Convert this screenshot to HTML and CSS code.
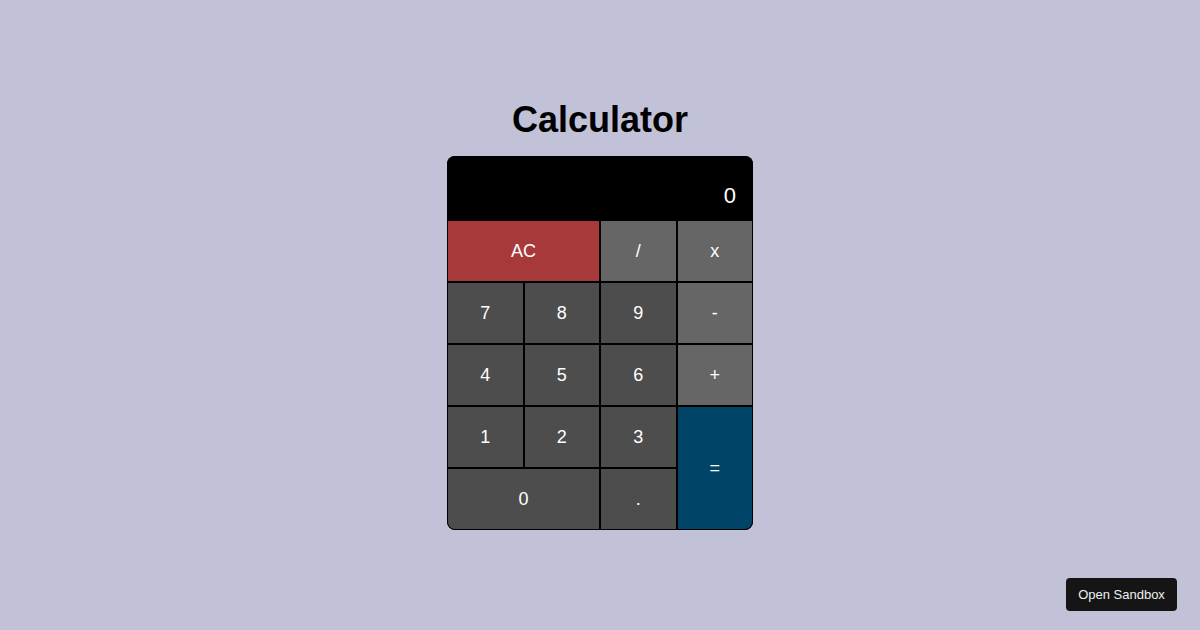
FILE: index.html
```html
<!DOCTYPE html>
<html>
<head>
<meta charset="utf-8">
<link rel="stylesheet" href="styles.css">
</head>
<body>
<main class="page">
  <h1 class="title">Calculator</h1>
  <div class="calc">
    <div class="display">0</div>
    <div class="keys">
      <button class="key key-clear span2">AC</button>
      <button class="key key-op">/</button>
      <button class="key key-op">x</button>
      <button class="key">7</button>
      <button class="key">8</button>
      <button class="key">9</button>
      <button class="key key-op">-</button>
      <button class="key">4</button>
      <button class="key">5</button>
      <button class="key">6</button>
      <button class="key key-op">+</button>
      <button class="key">1</button>
      <button class="key">2</button>
      <button class="key">3</button>
      <button class="key key-eq">=</button>
      <button class="key span2 key-bl">0</button>
      <button class="key">.</button>
    </div>
  </div>
</main>
<a class="sandbox">Open Sandbox</a>
</body>
</html>
```
FILE: styles.css
```css
html, body {
  margin: 0;
  padding: 0;
  height: 100%;
}
body {
  background: #c1c1d7;
  font-family: "Liberation Sans", Arial, sans-serif;
  overflow: hidden;
}
.page {
  display: flex;
  flex-direction: column;
  align-items: center;
  padding-top: 99px;
}
.title {
  margin: 0 0 15px 0;
  font-size: 36px;
  font-weight: bold;
  line-height: 42px;
  color: #000;
}
.calc {
  width: 306px;
  border-radius: 8px;
  overflow: hidden;
  background: #000;
}
.display {
  height: 64px;
  box-sizing: border-box;
  background: #000;
  color: #fff;
  font-size: 22px;
  text-align: right;
  padding: 27px 17px 0 0;
  line-height: 26px;
}
.keys {
  display: grid;
  grid-template-columns: repeat(4, 1fr);
  grid-auto-rows: 62px;
}
.key {
  border: 1px solid #000;
  margin: 0;
  background: #4d4d4d;
  color: #fff;
  font-family: "Liberation Sans", Arial, sans-serif;
  font-size: 18px;
  padding: 0;
  cursor: pointer;
}
.span2 {
  grid-column: span 2;
}
.key-clear {
  background: #a8393b;
}
.key-op {
  background: #666666;
}
.key-eq {
  background: #004568;
  grid-row: span 2;
  border-bottom-right-radius: 8px;
}
.key-bl {
  border-bottom-left-radius: 8px;
}
.sandbox {
  position: absolute;
  right: 23px;
  bottom: 19px;
  width: 111px;
  height: 33px;
  box-sizing: border-box;
  background: #151515;
  color: #f0f0f0;
  border-radius: 4px;
  font-size: 13px;
  display: flex;
  align-items: center;
  justify-content: center;
}
```
